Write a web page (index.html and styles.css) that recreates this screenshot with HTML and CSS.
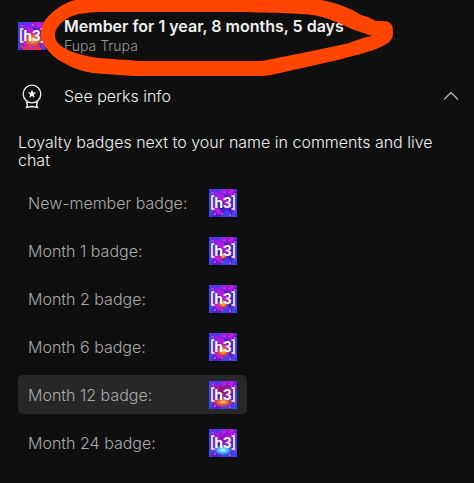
FILE: index.html
```
<!DOCTYPE html>
<html lang="en">
<head>
    <meta charset="UTF-8">
    <meta name="viewport" content="width=device-width, initial-scale=1">
    <title>Membership</title>
    <link rel="stylesheet" href="styles.css">
</head>
<body>
<!-- Shared badge artwork -->
<svg class="defs" aria-hidden="true">
    <defs>
        <linearGradient id="neon" x1="0" y1="0" x2="1" y2="1">
            <stop offset="0" stop-color="#5a2cf0"/>
            <stop offset="0.35" stop-color="#951de0"/>
            <stop offset="0.6" stop-color="#4422d0"/>
            <stop offset="1" stop-color="#6a22d8"/>
        </linearGradient>
        <radialGradient id="fire">
            <stop offset="0" stop-color="#ffc870"/>
            <stop offset="0.4" stop-color="#e5662c"/>
            <stop offset="1" stop-color="#c01880" stop-opacity="0"/>
        </radialGradient>
        <radialGradient id="ice">
            <stop offset="0" stop-color="#c8fbff"/>
            <stop offset="0.5" stop-color="#38b4f5"/>
            <stop offset="1" stop-color="#3050f0" stop-opacity="0"/>
        </radialGradient>
        <symbol id="splash" viewBox="0 0 28 28">
            <rect width="28" height="28" fill="url(#neon)"/>
            <path d="M0 0h4l-1 6 2 5-3 6 2 5-2 6H0zM24 8l4-3v23h-6l2-7zM8 0h5l-3 4zM17 21l5 2-4 5h-6z" fill="#3b45ee"/>
            <path d="M7 4l6 2 7 7 2 6-6-4-6-7zM20 0l5 1-2 6-4-3zM4 20l4-2 5 5-3 3z" fill="#bf1be0"/>
            <path d="M6 8l4 2 5 9-3 2-5-6zM15 5l6 4-2 2zM20 18l4 3-4 1z" fill="#3a13ac"/>
            <path d="M3 3h2v2H3zM14 2h2v2h-2zM25 4h2v2h-2zM5 24h2v2H5zM12 24h2v2h-2zM20 25h2v2h-2zM25 20h2v2h-2z" fill="#de35d5"/>
        </symbol>
        <symbol id="mark" viewBox="0 0 28 28">
            <text class="mark" x="14" y="19" text-anchor="middle">h3</text>
            <path d="M5.500 7H3v13h2.500M22.500 7H25v13h-2.500" fill="none" stroke="#fff" stroke-width="1.600"/>
        </symbol>
    </defs>
</svg>

<main class="membership">
    <header class="member">
        <svg class="badge" viewBox="0 0 28 28" aria-hidden="true">
            <use href="#splash"/>
            <ellipse cx="15" cy="18" rx="13" ry="10" fill="url(#fire)"/>
            <path d="M2 22l5 3 3-2 4 4 5-5 3 4 5-4-4 6H5z" fill="#e62a62"/>
            <use href="#mark"/>
        </svg>
        <div>
            <h1>Member for 1 year, 8 months, 5 days</h1>
            <p class="channel">Fupa Trupa</p>
        </div>
        <svg class="scribble" viewBox="0 0 400 80" aria-hidden="true">
            <path fill-rule="evenodd" fill="#ff4500" d="M75 0C60 4 46 16 42 26C38 38 45 50 57 59C68 66 80 71 92 73C105 74 118 75 134 76H264C272 75 284 72 298 69L342 59C352 56 366 53 376 49C386 45 393 41 393 34V30C393 24 389 21 383 21H376C371 18 366 16 361 15C352 9 338 3 321 0ZM55 37C54 29 61 21 72 16C81 13 90 12 104 12H240C274 13 304 13 318 16C333 20 346 26 354 30C361 32 366 34 372 36C360 38 354 42 345 44L312 51L262 61H138C120 59 104 59 92 57C76 54 57 48 55 37Z"/>
        </svg>
    </header>

    <button class="perks" type="button" aria-expanded="true" aria-controls="perks">
        <svg class="ribbon" viewBox="0 0 28 28" aria-hidden="true">
            <circle cx="14" cy="12" r="8.800"/>
            <path d="M10 20.500H8.500l1 2.500-1 2.500 5.500-1 5.500 1-1-2.500 1-2.500H18"/>
            <path class="star" d="M14 7.500l1.200 2.900 3.200.2-2.500 2 .8 3.100-2.700-1.700-2.700 1.700.8-3.100-2.500-2 3.200-.2z"/>
        </svg>
        <span>See perks info</span>
        <svg class="chevron" viewBox="0 0 16 10" aria-hidden="true">
            <path d="M1 8.500L8 1.500l7 7"/>
        </svg>
    </button>

    <section id="perks">
        <p class="intro">Loyalty badges next to your name in comments and live chat</p>
        <ul class="badges">
            <li>
                <span>New-member badge:</span>
                <svg class="badge" viewBox="0 0 28 28" aria-hidden="true">
                    <use href="#splash"/>
                    <use href="#mark"/>
                </svg>
            </li>
            <li>
                <span>Month 1 badge:</span>
                <svg class="badge" viewBox="0 0 28 28" aria-hidden="true">
                    <use href="#splash"/>
                    <ellipse cx="14" cy="19" rx="5" ry="4" fill="url(#fire)"/>
                    <use href="#mark"/>
                </svg>
            </li>
            <li>
                <span>Month 2 badge:</span>
                <svg class="badge" viewBox="0 0 28 28" aria-hidden="true">
                    <use href="#splash"/>
                    <ellipse cx="14" cy="19" rx="7" ry="6" fill="url(#fire)"/>
                    <use href="#mark"/>
                </svg>
            </li>
            <li>
                <span>Month 6 badge:</span>
                <svg class="badge" viewBox="0 0 28 28" aria-hidden="true">
                    <use href="#splash"/>
                    <ellipse cx="14" cy="18" rx="9" ry="8" fill="url(#fire)"/>
                    <use href="#mark"/>
                </svg>
            </li>
            <li class="current">
                <span>Month 12 badge:</span>
                <svg class="badge" viewBox="0 0 28 28" aria-hidden="true">
                    <use href="#splash"/>
                    <path d="M3 4l5 3 3-3 3 3 5-4 1 5 6-2-4 8H6z" fill="#a0167c"/>
                    <ellipse cx="14" cy="21" rx="12" ry="6" fill="url(#fire)"/>
                    <use href="#mark"/>
                </svg>
            </li>
            <li>
                <span>Month 24 badge:</span>
                <svg class="badge" viewBox="0 0 28 28" aria-hidden="true">
                    <use href="#splash"/>
                    <path d="M3 4l5 3 3-3 3 3 5-4 1 5 6-2-4 8H6z" fill="#9c12c8"/>
                    <ellipse cx="14" cy="21" rx="11" ry="6" fill="url(#ice)"/>
                    <use href="#mark"/>
                </svg>
            </li>
        </ul>
    </section>
</main>
</body>
</html>
```

FILE: styles.css
```
* {
    box-sizing: border-box;
}

body {
    margin: 0;
    background: #0f0f0f;
    color: #f1f1f1;
    font-family: Inter, Roboto, sans-serif;
    font-size: 16px;
    font-weight: 300;
    line-height: 18px;
}

h1, p, ul {
    margin: 0;
    padding: 0;
}

.defs {
    position: absolute;
    width: 0;
    height: 0;
}

.membership {
    padding: 0 15px 0 18px;
}

.badge {
    display: block;
    flex: none;
    width: 28px;
    height: 28px;
}

.mark {
    fill: #fff;
    font-family: Roboto, sans-serif;
    font-size: 15px;
    font-weight: 700;
}

/* header */
.member {
    position: relative;
    display: flex;
    align-items: center;
    gap: 18px;
    padding: 16px 0;
}

h1 {
    font-size: 16px;
    font-weight: 600;
    line-height: 20px;
}

.channel {
    color: #999;
    font-size: 14px;
    line-height: 20px;
}

/* hand-drawn ring over the header */
.scribble {
    position: absolute;
    top: 0;
    left: -18px;
    width: 400px;
    height: 80px;
    pointer-events: none;
}

.perks {
    display: flex;
    align-items: center;
    gap: 18px;
    width: 100%;
    padding: 10px 0;
    border: 0;
    background: none;
    color: inherit;
    font: inherit;
    text-align: left;
    cursor: pointer;
}

.ribbon {
    width: 28px;
    height: 28px;
    fill: none;
    stroke: #f1f1f1;
    stroke-width: 1.3;
}

.ribbon .star {
    fill: #f1f1f1;
    stroke: none;
}

.chevron {
    width: 16px;
    height: 10px;
    margin-left: auto;
    fill: none;
    stroke: #aaa;
    stroke-width: 1.5;
}

.intro {
    padding: 13px 0 14px;
}

.badges {
    list-style: none;
    display: grid;
    gap: 9px;
    width: 229px;
}

.badges li {
    display: flex;
    align-items: center;
    justify-content: space-between;
    height: 39px;
    padding: 0 10px;
    border-radius: 5px;
    color: #aaa;
}

.badges .current {
    background: #272727;
}
```
